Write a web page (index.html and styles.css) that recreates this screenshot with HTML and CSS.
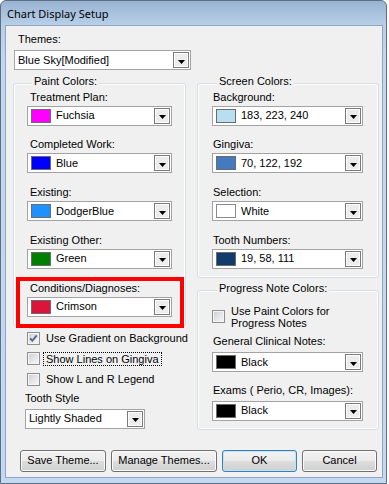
FILE: index.html
```html
<!DOCTYPE html>
<html>
<head>
<meta charset="utf-8">
<title>Chart Display Setup</title>
<link rel="stylesheet" href="styles.css">
</head>
<body>
<div class="window">
  <div class="titlebar">Chart Display Setup</div>
  <div class="client">
    <div class="themes">
      <div class="lbl">Themes:</div>
      <div class="combo combo-theme">
        <span class="ctext">Blue Sky[Modified]</span>
        <span class="dd"><svg width="7" height="4" viewBox="0 0 7 4"><path d="M0 0H7L3.5 4Z"/></svg></span>
      </div>
    </div>

    <div class="columns">
      <div class="col">
        <div class="group group-paint">
          <div class="legend">Paint Colors:</div>
          <div class="field">
            <div class="lbl">Treatment Plan:</div>
            <div class="combo"><span class="sw sw-fuchsia"></span><span class="ctext">Fuchsia</span><span class="dd"><svg width="7" height="4" viewBox="0 0 7 4"><path d="M0 0H7L3.5 4Z"/></svg></span></div>
          </div>
          <div class="field">
            <div class="lbl">Completed Work:</div>
            <div class="combo"><span class="sw sw-blue"></span><span class="ctext">Blue</span><span class="dd"><svg width="7" height="4" viewBox="0 0 7 4"><path d="M0 0H7L3.5 4Z"/></svg></span></div>
          </div>
          <div class="field">
            <div class="lbl">Existing:</div>
            <div class="combo"><span class="sw sw-dodger"></span><span class="ctext">DodgerBlue</span><span class="dd"><svg width="7" height="4" viewBox="0 0 7 4"><path d="M0 0H7L3.5 4Z"/></svg></span></div>
          </div>
          <div class="field">
            <div class="lbl">Existing Other:</div>
            <div class="combo"><span class="sw sw-green"></span><span class="ctext">Green</span><span class="dd"><svg width="7" height="4" viewBox="0 0 7 4"><path d="M0 0H7L3.5 4Z"/></svg></span></div>
          </div>
          <div class="field">
            <div class="lbl">Conditions/Diagnoses:</div>
            <div class="combo"><span class="sw sw-crimson"></span><span class="ctext">Crimson</span><span class="dd"><svg width="7" height="4" viewBox="0 0 7 4"><path d="M0 0H7L3.5 4Z"/></svg></span></div>
          </div>
        </div>

        <div class="checks">
          <div class="check">
            <span class="cb"><svg width="11" height="11" viewBox="0 0 11 11"><path d="M2.2 5.4L4.3 7.8L8.8 2.4" fill="none" stroke="#4a5d8a" stroke-width="1.7"/></svg></span>
            <span class="ctl">Use Gradient on Background</span>
          </div>
          <div class="check">
            <span class="cb"></span>
            <span class="ctl focus">Show Lines on Gingiva</span>
          </div>
          <div class="check">
            <span class="cb"></span>
            <span class="ctl">Show L and R Legend</span>
          </div>
        </div>

        <div class="lbl lbl-style">Tooth Style</div>
        <div class="combo combo-style">
          <span class="ctext">Lightly Shaded</span>
          <span class="dd"><svg width="7" height="4" viewBox="0 0 7 4"><path d="M0 0H7L3.5 4Z"/></svg></span>
        </div>
      </div>

      <div class="col">
        <div class="group group-screen">
          <div class="legend">Screen Colors:</div>
          <div class="field">
            <div class="lbl">Background:</div>
            <div class="combo"><span class="sw sw-bg"></span><span class="ctext">183, 223, 240</span><span class="dd"><svg width="7" height="4" viewBox="0 0 7 4"><path d="M0 0H7L3.5 4Z"/></svg></span></div>
          </div>
          <div class="field">
            <div class="lbl">Gingiva:</div>
            <div class="combo"><span class="sw sw-gingiva"></span><span class="ctext">70, 122, 192</span><span class="dd"><svg width="7" height="4" viewBox="0 0 7 4"><path d="M0 0H7L3.5 4Z"/></svg></span></div>
          </div>
          <div class="field">
            <div class="lbl">Selection:</div>
            <div class="combo"><span class="sw sw-white"></span><span class="ctext">White</span><span class="dd"><svg width="7" height="4" viewBox="0 0 7 4"><path d="M0 0H7L3.5 4Z"/></svg></span></div>
          </div>
          <div class="field">
            <div class="lbl">Tooth Numbers:</div>
            <div class="combo"><span class="sw sw-teeth"></span><span class="ctext">19, 58, 111</span><span class="dd"><svg width="7" height="4" viewBox="0 0 7 4"><path d="M0 0H7L3.5 4Z"/></svg></span></div>
          </div>
        </div>

        <div class="group group-progress">
          <div class="legend">Progress Note Colors:</div>
          <div class="check check-two">
            <span class="cb"></span>
            <span class="ctl">Use Paint Colors for<br>Progress Notes</span>
          </div>
          <div class="field field-gcn">
            <div class="lbl">General Clinical Notes:</div>
            <div class="combo"><span class="sw sw-black"></span><span class="ctext">Black</span><span class="dd"><svg width="7" height="4" viewBox="0 0 7 4"><path d="M0 0H7L3.5 4Z"/></svg></span></div>
          </div>
          <div class="field field-exams">
            <div class="lbl">Exams ( Perio, CR, Images):</div>
            <div class="combo"><span class="sw sw-black"></span><span class="ctext">Black</span><span class="dd"><svg width="7" height="4" viewBox="0 0 7 4"><path d="M0 0H7L3.5 4Z"/></svg></span></div>
          </div>
        </div>
      </div>
    </div>

    <div class="buttons">
      <div class="btn btn-save">Save Theme...</div>
      <div class="btn btn-manage">Manage Themes...</div>
      <div class="btn btn-ok btn-default">OK</div>
      <div class="btn btn-cancel">Cancel</div>
    </div>

    <div class="highlight"></div>
  </div>
</div>
</body>
</html>
```

FILE: styles.css
```css
html, body {
  margin: 0;
  padding: 0;
  background: #ffffff;
}

body {
  font-family: "Liberation Sans", Arial, sans-serif;
  font-size: 11px;
  line-height: 13px;
  color: #000000;
}

.window {
  width: 387px;
  height: 484px;
  box-sizing: border-box;
  border: 1px solid #5d6f86;
  border-radius: 6px 6px 0 0;
  background: linear-gradient(#98b3d2 0px, #b8cfe8 24px, #c2d7ee 60px, #c4d9ef 100%);
  padding: 0 3px 5px 4px;
  display: flex;
  flex-direction: column;
}

.titlebar {
  height: 23px;
  padding: 1px 0 0 2px;
  font-family: "Noto Sans", "Liberation Sans", sans-serif;
  font-size: 11px;
  line-height: 23px;
  color: #000000;
  white-space: nowrap;
}

.client {
  flex: 1;
  position: relative;
  background: #f0f0f0;
  border: 1px solid #8fa5bf;
  display: flex;
  flex-direction: column;
}

/* Themes */
.themes {
  padding: 7px 0 0 8px;
}
.themes .lbl {
  margin: 0 0 4px 4px;
}
.combo-theme {
  width: 177px;
}

/* Combo */
.combo {
  display: flex;
  align-items: center;
  height: 20px;
  box-sizing: border-box;
  border: 1px solid #a3a3a3;
  background: #ffffff;
  padding-left: 3px;
  white-space: nowrap;
}
.sw {
  width: 20px;
  height: 14px;
  box-sizing: border-box;
  border: 1px solid #6b6b6b;
  flex: none;
}
.sw + .ctext {
  margin-left: 5px;
}
.dd {
  margin-left: auto;
  margin-right: 1px;
  width: 16px;
  height: 16px;
  box-sizing: border-box;
  border: 1px solid #7a7a7a;
  background: #ececec;
  box-shadow: inset 0 0 0 1px #ffffff;
  display: flex;
  align-items: center;
  justify-content: center;
  flex: none;
}
.dd svg {
  margin-top: 3px;
  fill: #000000;
}

.sw-fuchsia { background: #ff00ff; }
.sw-blue { background: #0000ff; }
.sw-dodger { background: #1e90ff; }
.sw-green { background: #008000; }
.sw-crimson { background: #dc143c; }
.sw-bg { background: rgb(183, 223, 240); }
.sw-gingiva { background: rgb(70, 122, 192); }
.sw-white { background: #ffffff; border-color: #8a8a8a; }
.sw-teeth { background: rgb(19, 58, 111); }
.sw-black { background: #000000; }

/* Columns */
.columns {
  display: grid;
  grid-template-columns: 173px 182px;
  column-gap: 11px;
  align-items: start;
  margin: 13px 0 0 7px;
}
.col {
  display: flex;
  flex-direction: column;
}

/* Group boxes */
.group {
  border: 1px solid #d5dfe5;
  border-radius: 3px;
  box-shadow: inset 0 0 0 1px #ffffff;
}
.legend {
  margin: -9px 0 0 5px;
  padding: 0 2px;
  width: max-content;
  background: #f0f0f0;
}
.group-paint {
  padding: 0 13px 8px 13px;
}
.group-screen {
  padding: 0 15px 8px 14px;
}
.group-progress {
  margin-top: 12px;
  padding: 0 15px 8px 14px;
}

.field {
  margin-top: 12.8px;
}
.legend + .field {
  margin-top: 2.6px;
}
.field .lbl {
  margin-bottom: 2px;
}
.group-paint .field .lbl {
  margin-left: 3px;
}
.group-screen .field .lbl,
.group-progress .field .lbl {
  margin-left: 1px;
}
.group-paint .combo {
  width: 145px;
}
.group-screen .combo,
.group-progress .combo {
  width: 151px;
}
.group-progress .field .lbl {
  margin-bottom: 4px;
}
.group-progress .field-gcn {
  margin-top: 6.5px;
}
.group-progress .field-exams {
  margin-top: 11.5px;
}

/* Checkboxes */
.checks {
  margin-top: 2px;
  padding-left: 14px;
}
.check {
  display: flex;
  align-items: center;
  height: 20.5px;
  white-space: nowrap;
}
.cb {
  width: 13px;
  height: 13px;
  box-sizing: border-box;
  border: 1px solid #8e8f8f;
  background: linear-gradient(135deg, #c9ccd1 0%, #e6e7e9 55%, #f6f6f6 100%);
  box-shadow: inset 0 0 0 1px #f4f4f4;
  margin-right: 6px;
  flex: none;
  display: flex;
  align-items: center;
  justify-content: center;
}
.ctl.focus {
  border: 1px dotted #000000;
  padding: 0 2px;
  margin-left: -3px;
  line-height: 12px;
}
.check-two {
  height: auto;
  margin-top: 10px;
}
.check-two .ctl {
  line-height: 12px;
}

.lbl-style {
  margin: 3px 0 3.5px 12px;
}
.combo-style {
  width: 120px;
  margin-left: 12px;
}

/* Buttons */
.buttons {
  display: flex;
  gap: 5px;
  margin-top: 20px;
  padding-left: 14px;
}
.btn {
  height: 22px;
  box-sizing: border-box;
  border: 1px solid #707070;
  border-radius: 3px;
  background: linear-gradient(#f2f2f2 0%, #ebebeb 50%, #dddddd 51%, #cfcfcf 100%);
  box-shadow: inset 0 0 0 1px #fbfbfb;
  display: flex;
  align-items: center;
  justify-content: center;
  padding-bottom: 1px;
  white-space: nowrap;
}
.btn-save { width: 86px; }
.btn-manage { width: 106px; }
.btn-ok { width: 75px; }
.btn-cancel { width: 75px; }
.btn-default {
  border-color: #3c7fb1;
  box-shadow: inset 0 0 0 1px #bfe4f8;
}

/* Red annotation box */
.highlight {
  position: absolute;
  left: 10px;
  top: 251px;
  width: 168px;
  height: 51px;
  box-sizing: border-box;
  border: 4px solid #ff0000;
}
```
